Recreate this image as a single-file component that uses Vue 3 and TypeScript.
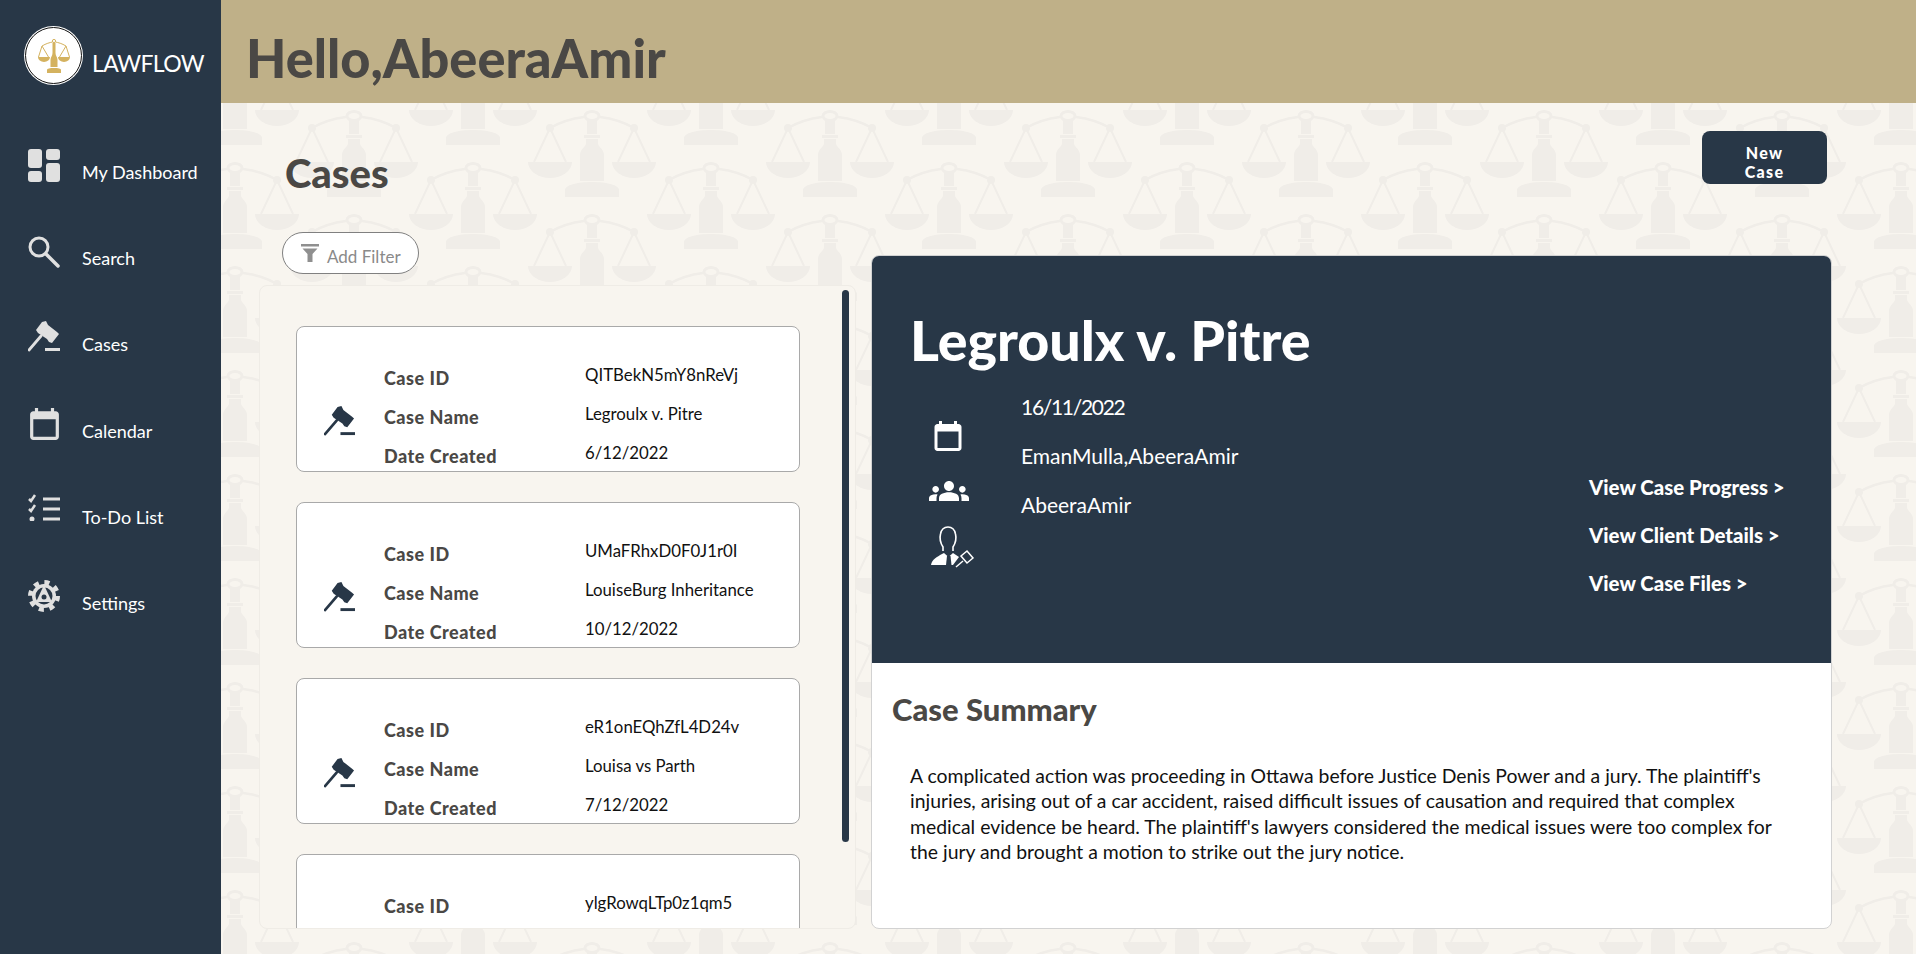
<template>
  <div class="app">
    <aside class="sidebar">
      <div class="brand">
        <div class="logo">
          <svg viewBox="0 0 32 34" width="32" height="34">
            <g fill="none" stroke="#d4b25f" stroke-width="1">
              <circle cx="16" cy="2" r="1.6" />
              <path d="M4 7C8 4.500 12 3.500 14.500 3M17.500 3C20 3.500 24 4.500 28 7" />
              <path d="M4 7L0.500 18M4 7L10.500 18M28 7L21.500 18M28 7L31.500 18" />
            </g>
            <g fill="#d4b25f">
              <path d="M0 18H12A6 5 0 0 1 0 18Z" />
              <path d="M20 18H32A6 5 0 0 1 20 18Z" />
              <path d="M14.500 4H17.500V14C17.500 17 19.500 18 19.500 21V28H12.500V21C12.500 18 14.500 17 14.500 14Z" />
              <path d="M9 34V31C9 29.500 12 29 16 29C20 29 23 29.500 23 31V34Z" />
            </g>
          </svg>
        </div>
        <span class="brand-name">LAWFLOW</span>
      </div>
      <nav class="nav">
        <a v-for="item in navItems" :key="item.label" class="nav-item">
          <span class="nav-icon">
            <svg v-if="item.icon === 'dashboard'" viewBox="0 0 32 33" width="32" height="33" fill="#e0e0e0">
              <rect x="0" y="0" width="14" height="19" rx="3" />
              <rect x="18" y="0" width="14" height="11" rx="3" />
              <rect x="0" y="22" width="14" height="11" rx="3" />
              <rect x="18" y="14" width="14" height="19" rx="3" />
            </svg>
            <svg v-else-if="item.icon === 'search'" viewBox="0 0 32 33" width="32" height="33" fill="none" stroke="#e0e0e0">
              <circle cx="11" cy="12" r="9" stroke-width="3" />
              <path d="M18 19L30 31" stroke-width="3.500" stroke-linecap="round" />
            </svg>
            <svg v-else-if="item.icon === 'cases'" viewBox="0 0 32 32" width="32" height="32" fill="#e0e0e0">
              <path :d="gavelHead" />
              <path d="M13 15L1 29" stroke="#e0e0e0" stroke-width="2.800" stroke-linecap="round" />
              <rect x="17" y="27" width="15" height="3" />
            </svg>
            <svg v-else-if="item.icon === 'calendar'" class="calendar" viewBox="3 2 18 20" width="29" height="32" fill="#e0e0e0">
              <path :d="calendarPath" />
            </svg>
            <svg v-else-if="item.icon === 'todo'" viewBox="0 0 32 27" width="32" height="27" fill="none" stroke="#e0e0e0">
              <path d="M15 5H32M15 15H32M15 25H32" stroke-width="3" />
              <path d="M1 5L3 7L7 1M1 15L3 17L7 11" stroke-width="2.500" />
              <circle cx="4" cy="25" r="2.500" fill="#e0e0e0" stroke="none" />
            </svg>
            <svg v-else viewBox="0 0 32 32" width="32" height="32">
              <circle cx="16" cy="16" r="13.500" fill="none" stroke="#e0e0e0" stroke-width="5" stroke-dasharray="5 5.600" />
              <circle cx="16" cy="16" r="12" fill="#e0e0e0" />
              <circle cx="16" cy="16" r="8.500" fill="#283747" />
              <path d="M16 5L24 22H8Z" fill="#e0e0e0" />
              <circle cx="16" cy="17" r="2.500" fill="#283747" />
            </svg>
          </span>
          <span class="nav-label">{{ item.label }}</span>
        </a>
      </nav>
    </aside>

    <main class="main" :style="{ backgroundImage: patternUrl }">
      <header class="topbar">
        <h1>Hello,AbeeraAmir</h1>
      </header>

      <div class="content">
        <section class="left">
          <h2 class="page-title">Cases</h2>
          <button class="filter-btn">
            <svg viewBox="0 0 18 18" width="18" height="18" fill="#8f8f8f">
              <rect x="0" y="0" width="18" height="2.500" />
              <path d="M1.500 4.500H16.500L11.500 10V18H6.500V10Z" />
            </svg>
            Add Filter
          </button>
          <div class="list-panel">
            <div v-for="c in cases" :key="c.id" class="case-card">
              <svg v-if="c.name" class="case-icon" viewBox="0 0 32 32" width="31" height="31" fill="#283747">
                <path :d="gavelHead" />
                <path d="M13 15L1 29" stroke="#283747" stroke-width="2.800" stroke-linecap="round" />
                <rect x="17" y="27" width="15" height="3" />
              </svg>
              <span v-else class="case-icon-gap"></span>
              <dl class="case-fields">
                <dt>Case ID</dt>
                <dd>{{ c.id }}</dd>
                <template v-if="c.name">
                  <dt>Case Name</dt>
                  <dd>{{ c.name }}</dd>
                  <dt>Date Created</dt>
                  <dd>{{ c.date }}</dd>
                </template>
              </dl>
            </div>
            <div class="scroll-thumb"></div>
          </div>
        </section>

        <section class="right">
          <button class="new-case">New<br />Case</button>
          <article class="detail">
            <div class="detail-head">
              <h2>Legroulx v. Pitre</h2>
              <div class="detail-row">
                <div class="detail-icons">
                  <svg viewBox="3 2 18 20" width="28" height="30" fill="#fff">
                    <path :d="calendarPath" />
                  </svg>
                  <svg class="people" viewBox="0 5.500 24 13" width="40" height="22" fill="#fff">
                    <path d="M12 12.750c1.630 0 3.070.390 4.240.900 1.080.480 1.760 1.560 1.760 2.730V18H6v-1.610c0-1.180.680-2.260 1.760-2.730 1.170-.520 2.610-.910 4.240-.910zM4 13c1.100 0 2-.900 2-2s-.900-2-2-2-2 .900-2 2 .900 2 2 2zm1.130 1.100c-.370-.060-.740-.100-1.130-.100-.990 0-1.930.210-2.780.580C.480 14.900 0 15.620 0 16.430V18h4.500v-1.610c0-.830.230-1.610.630-2.290zM20 13c1.100 0 2-.900 2-2s-.900-2-2-2-2 .900-2 2 .900 2 2 2zm4 3.430c0-.810-.480-1.530-1.220-1.850-.850-.370-1.790-.580-2.780-.580-.390 0-.760.040-1.130.100.400.680.630 1.460.630 2.290V18H24v-1.570zM12 6c1.660 0 3 1.340 3 3s-1.340 3-3 3-3-1.340-3-3 1.340-3 3-3z" />
                  </svg>
                  <svg class="lawyer" viewBox="0 0 44 42" width="44" height="42">
                    <path d="M12 25V21C9.500 17 8.500 12 9.500 8C10.500 3 14 1 17 1C20 1 23.500 3 24.500 8C25.500 12 24.500 17 22 21V25" fill="none" stroke="#fff" stroke-width="1.600" />
                    <path d="M0 39C1 33 6 31 11 28L13 27L17.500 31L22 27L28 31L22 39Z" fill="#fff" />
                    <path d="M16 30H19.500L20.500 39H15Z" fill="#283747" />
                    <g fill="none" stroke="#fff" stroke-width="1.500">
                      <path d="M30 30L36 25L42 32L36 37Z" />
                      <path d="M32 35L25 41" />
                    </g>
                  </svg>
                </div>
                <div class="detail-meta">
                  <p class="date">16/11/2022</p>
                  <p>EmanMulla,AbeeraAmir</p>
                  <p>AbeeraAmir</p>
                </div>
                <div class="detail-links">
                  <a>View Case Progress &gt;</a>
                  <a>View Client Details &gt;</a>
                  <a>View Case Files &gt;</a>
                </div>
              </div>
            </div>
            <div class="detail-body">
              <h3>Case Summary</h3>
              <p>
                A complicated action was proceeding in Ottawa before Justice Denis Power and a jury. The plaintiff's<br />
                injuries, arising out of a car accident, raised difficult issues of causation and required that complex<br />
                medical evidence be heard. The plaintiff's lawyers considered the medical issues were too complex for<br />
                the jury and brought a motion to strike out the jury notice.
              </p>
            </div>
          </article>
        </section>
      </div>
    </main>
  </div>
</template>

<script setup lang="ts">
interface NavItem {
  label: string;
  icon: string;
}

interface CaseRow {
  id: string;
  name?: string;
  date?: string;
}

const navItems: NavItem[] = [
  { label: 'My Dashboard', icon: 'dashboard' },
  { label: 'Search', icon: 'search' },
  { label: 'Cases', icon: 'cases' },
  { label: 'Calendar', icon: 'calendar' },
  { label: 'To-Do List', icon: 'todo' },
  { label: 'Settings', icon: 'settings' },
];

// last card runs off the panel, only its id shows
const cases: CaseRow[] = [
  { id: 'QITBekN5mY8nReVj', name: 'Legroulx v. Pitre', date: '6/12/2022' },
  { id: 'UMaFRhxD0F0J1r0I', name: 'LouiseBurg Inheritance', date: '10/12/2022' },
  { id: 'eR1onEQhZfL4D24v', name: 'Louisa vs Parth', date: '7/12/2022' },
  { id: 'ylgRowqLTp0z1qm5' },
];

const calendarPath =
  'M19 4h-1V2h-2v2H8V2H6v2H5c-1.110 0-2 .900-2 2v14c0 1.100.890 2 2 2h14c1.100 0 2-.900 2-2V6c0-1.100-.900-2-2-2zm0 16H5V9h14v11z';

const gavelHead = 'M14 1L18 0L20 4L29 11L31 13L24 22L21 21L19 18L10 12L8 9Z';

// one balance for the wallpaper, centred on x=0, repeated staggered in the tile
const balance = `
  <g fill='none' stroke='#f0ede8'>
    <ellipse cx='0' cy='6' rx='7' ry='4.500' stroke-width='3'/>
    <path d='M-42 18C-30 11 -16 8 -8 7M8 7C16 8 30 11 42 18' stroke-width='2.500'/>
    <path d='M-42 18L-58 52M-42 18L-26 52M42 18L26 52M42 18L58 52' stroke-width='2'/>
  </g>
  <g fill='#f0ede8'>
    <circle cx='-42' cy='18' r='4'/>
    <circle cx='42' cy='18' r='4'/>
    <rect x='-5' y='11' width='10' height='13'/>
    <rect x='-8' y='25' width='16' height='3'/>
    <path d='M-6 29H6V33C6 37 12 39 12 45V71H-12V45C-12 39 -6 37 -6 33Z'/>
    <path d='M-27 87V80C-27 75 -15 72 0 72C15 72 27 75 27 80V87Z'/>
    <path d='M-64 52H-20A22 16 0 0 1 -64 52Z'/>
    <path d='M20 52H64A22 16 0 0 1 20 52Z'/>
  </g>`;

const spots: [number, number][] = [
  [59, 10],
  [297, 10],
  [178, 62],
  [178, -42],
  [-60, 62],
  [-60, -42],
];

const tile = `<svg xmlns='http://www.w3.org/2000/svg' width='238' height='104'>${spots
  .map(([x, y]) => `<g transform='translate(${x} ${y})'>${balance}</g>`)
  .join('')}</svg>`;

const patternUrl = `url("data:image/svg+xml,${encodeURIComponent(tile)}")`;
</script>

<style>
html,
body {
  margin: 0;
  overflow: hidden;
}
</style>

<style scoped>
.app {
  display: flex;
  height: 954px;
  overflow: hidden;
  font-family: Lato, "Open Sans", sans-serif;
}

.sidebar {
  flex: 0 0 221px;
  box-sizing: border-box;
  padding-top: 27px;
  background: #283747;
  color: #fff;
}
.brand {
  display: flex;
  align-items: center;
  padding-left: 25px;
}
.logo {
  display: flex;
  align-items: center;
  justify-content: center;
  box-sizing: border-box;
  width: 57px;
  height: 57px;
  border: 1px solid #111;
  border-radius: 50%;
  background: #fff;
  box-shadow: 0 0 0 1px #fff;
}
.brand-name {
  margin-left: 10px;
  padding-top: 14px;
  font-size: 23px;
  letter-spacing: -0.600px;
}
.nav {
  margin-top: 65px;
}
.nav-item {
  display: flex;
  height: 86.200px;
  padding-left: 28px;
}
.nav-icon {
  flex: 0 0 54px;
}
.nav-icon svg {
  display: block;
}
.nav-icon .calendar {
  margin-left: 2px;
}
.nav-label {
  padding-top: 11px;
  font-size: 18px;
  line-height: 24px;
}

.main {
  flex: 1;
  background-color: #f8f5ef;
  background-position: -164px -4px;
}
.topbar {
  display: flex;
  align-items: center;
  box-sizing: border-box;
  height: 103px;
  padding: 12px 0 0 25px;
  background: #bfb088;
}
.topbar h1 {
  margin: 0;
  font-size: 52.300px;
  font-weight: 900;
  color: #4a4845;
}

.content {
  display: flex;
  gap: 15px;
  padding-left: 38px;
}
.left {
  flex: 0 0 597px;
}
.page-title {
  margin: 0;
  padding: 49px 0 0 26px;
  font-size: 40px;
  line-height: 42px;
  font-weight: 900;
  color: #4a4845;
}
.filter-btn {
  display: flex;
  align-items: center;
  gap: 8px;
  box-sizing: border-box;
  width: 137px;
  height: 42px;
  margin: 38px 0 11px 23px;
  padding: 6px 0 0 18px;
  border: 1px solid #808080;
  border-radius: 21px;
  background: #fff;
  font-family: inherit;
  font-size: 17px;
  color: #8a8a8a;
}
.filter-btn svg {
  margin-top: -6px;
}
.list-panel {
  position: relative;
  box-sizing: border-box;
  height: 644px;
  padding: 40px 0 0 36px;
  overflow: hidden;
  border: 1px solid #efece6;
  border-radius: 8px;
  background: #f8f5ef;
}
.case-card {
  display: flex;
  box-sizing: border-box;
  width: 504px;
  height: 146px;
  margin-bottom: 30px;
  padding-left: 27px;
  border: 1px solid #a9a9a9;
  border-radius: 8px;
  background: #fff;
}
.case-icon {
  flex: none;
  margin-top: 79px;
}
.case-icon-gap {
  flex: 0 0 31px;
}
.case-fields {
  display: grid;
  grid-template-columns: 201px 1fr;
  grid-auto-rows: 39px;
  align-content: start;
  margin: 31px 0 0 29px;
  align-items: center;
}
.case-fields dt {
  font-size: 18px;
  font-weight: 900;
  letter-spacing: 0.500px;
  color: #4a4845;
}
.case-fields dd {
  margin: -6px 0 0;
  font-size: 16.800px;
  color: #111;
}
.scroll-thumb {
  position: absolute;
  top: 4px;
  right: 6px;
  width: 7px;
  height: 552px;
  border-radius: 4px;
  background: #283747;
}

.right {
  display: flex;
  flex: 0 0 961px;
  flex-direction: column;
  align-items: flex-end;
}
.new-case {
  box-sizing: border-box;
  width: 125px;
  height: 53px;
  margin: 28px 5px 71px 0;
  padding: 9px 0 0;
  border: none;
  border-radius: 8px;
  background: #283747;
  font-family: inherit;
  font-size: 16px;
  line-height: 19px;
  font-weight: 900;
  letter-spacing: 1.300px;
  color: #fff;
}
.detail {
  width: 100%;
  height: 674px;
  overflow: hidden;
  box-sizing: border-box;
  border: 1px solid #d2d2d2;
  border-radius: 8px;
  background: #fff;
}
.detail-head {
  box-sizing: border-box;
  height: 408px;
  margin: -1px -1px 0;
  padding: 55px 0 0 39px;
  background: #283747;
  color: #fff;
}
.detail-head h2 {
  margin: 0;
  font-size: 55.500px;
  line-height: 60px;
  font-weight: 900;
}
.detail-row {
  display: flex;
  margin-top: 24px;
}
.detail-icons {
  display: flex;
  flex: 0 0 111px;
  flex-direction: column;
  align-items: flex-start;
  padding: 27px 0 0 24px;
  box-sizing: border-box;
}
.detail-icons svg {
  display: block;
  margin-bottom: 29px;
}
.detail-icons .people {
  margin-left: -5px;
}
.detail-icons .lawyer {
  margin: -5px 0 0 -3px;
}
.detail-meta {
  flex: 0 0 568px;
}
.detail-meta p {
  margin: 0 0 24px;
  font-size: 21px;
  line-height: 25px;
}
.detail-meta .date {
  letter-spacing: -1.300px;
}
.detail-links {
  display: flex;
  flex-direction: column;
  gap: 25px;
  padding-top: 82px;
}
.detail-links a {
  font-size: 20.400px;
  line-height: 23px;
  font-weight: 900;
}
.detail-body {
  padding: 29px 0 0 20px;
}
.detail-body h3 {
  margin: 0;
  font-size: 31px;
  line-height: 34px;
  font-weight: 900;
  color: #4a4845;
}
.detail-body p {
  margin: 37px 0 0 18px;
  font-size: 19.400px;
  line-height: 25.400px;
  color: #111;
}
</style>
